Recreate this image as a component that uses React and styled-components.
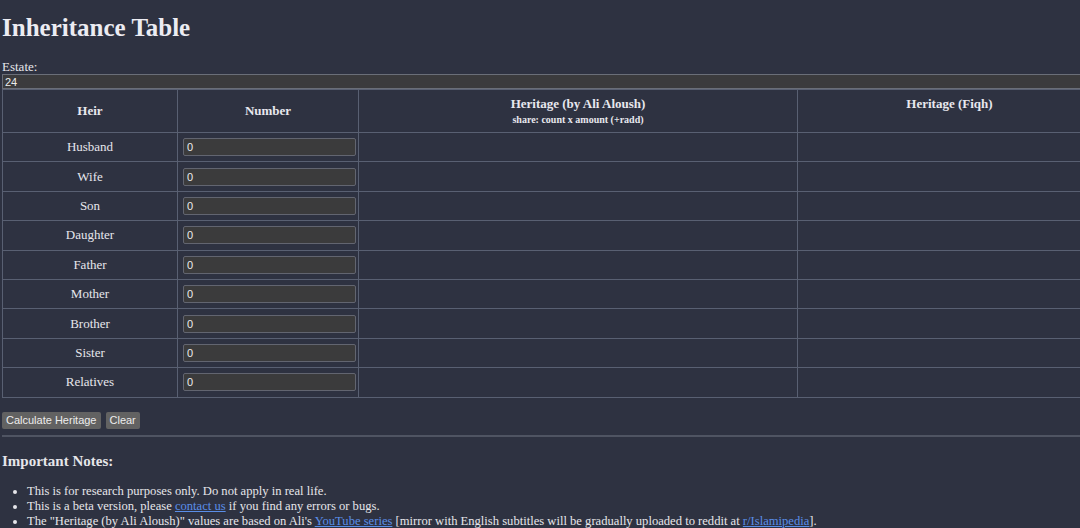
import React from 'react';
import styled, { createGlobalStyle } from 'styled-components';

const GlobalStyle = createGlobalStyle`
  html, body {
    margin: 0;
    padding: 0;
    background: #2e3241;
    overflow-x: hidden;
  }
  body {
    font-family: 'Liberation Serif', 'Times New Roman', serif;
    color: #e6e6ea;
  }
`;

const Page = styled.div`
  width: 1100px;
  padding: 0 0 0 2px;
`;

const Title = styled.h1`
  font-size: 25px;
  font-weight: 700;
  margin: 13px 0 17px;
  line-height: 30px;
  color: #ececf2;
`;

const Label = styled.div`
  font-size: 13px;
  line-height: 14px;
`;

const EstateInput = styled.input`
  display: block;
  box-sizing: border-box;
  width: 100%;
  height: 15px;
  margin: 0;
  padding: 0 2px;
  font-family: 'Liberation Sans', Arial, sans-serif;
  font-size: 11px;
  color: #ececec;
  background: #3b3b3d;
  border: 1px solid #6a6e78;
  outline: none;
`;

const Table = styled.table`
  width: 100%;
  border-collapse: collapse;
  table-layout: fixed;
  margin-top: 0;
`;

const Th = styled.th`
  border: 1px solid #596072;
  border-left-color: ${p => (p.$blue ? '#4a5f8c' : '#596072')};
  height: ${p => (p.$top ? '36px' : '42px')};
  padding: ${p => (p.$top ? '6px 0 0' : '0')};
  font-size: 13px;
  font-weight: 700;
  color: #e8e8ee;
  vertical-align: ${p => (p.$top ? 'top' : 'middle')};
  text-align: center;
`;

const Sub = styled.div`
  font-size: 10px;
  margin-top: 2px;
`;

const Td = styled.td`
  border: 1px solid #596072;
  border-left-color: ${p => (p.$blue ? '#4a5f8c' : '#596072')};
  height: 28.4px;
  padding: 0;
  font-size: 13px;
  color: #e6e6ec;
  text-align: ${p => (p.$left ? 'left' : 'center')};
`;

const NumInput = styled.input`
  display: block;
  box-sizing: border-box;
  width: 173px;
  height: 18px;
  margin: 0 0 0 5px;
  padding: 0 3px;
  font-family: 'Liberation Sans', Arial, sans-serif;
  font-size: 11px;
  color: #ececec;
  background: #3b3b3c;
  border: 1px solid #626570;
  border-radius: 2px;
  outline: none;
`;

const Buttons = styled.div`
  display: flex;
  gap: 5px;
  margin-top: 14px;
`;

const Button = styled.button`
  height: 17px;
  padding: 0 4px;
  font-family: 'Liberation Sans', Arial, sans-serif;
  font-size: 11px;
  color: #ededed;
  background: #626262;
  border: none;
  border-radius: 2px;
  cursor: pointer;
`;

const Rule = styled.hr`
  margin: 6px 0 0;
  border: none;
  border-top: 2px solid #4f5462;
  width: 1078px;
`;

const Notes = styled.h3`
  font-size: 15px;
  font-weight: 700;
  margin: 15px 0 14px;
  line-height: 18px;
`;

const List = styled.ul`
  margin: 0;
  padding-left: 25px;
  font-size: 12.6px;
  line-height: 15px;
`;

const Link = styled.a`
  color: #5a8ee8;
  text-decoration: underline;
`;

const heirs = ['Husband', 'Wife', 'Son', 'Daughter', 'Father', 'Mother', 'Brother', 'Sister', 'Relatives'];

export default function App() {
  return (
    <Page>
      <GlobalStyle />
      <Title>Inheritance Table</Title>
      <Label>Estate:</Label>
      <EstateInput defaultValue="24" />
      <Table>
        <colgroup>
          <col style={{ width: 175 }} />
          <col style={{ width: 181 }} />
          <col style={{ width: 439 }} />
          <col />
        </colgroup>
        <thead>
          <tr>
            <Th>Heir</Th>
            <Th>Number</Th>
            <Th $blue $top>
              Heritage (by Ali Aloush)
              <Sub>share: count x amount (+radd)</Sub>
            </Th>
            <Th $blue $top>Heritage (Fiqh)</Th>
          </tr>
        </thead>
        <tbody>
          {heirs.map(h => (
            <tr key={h}>
              <Td>{h}</Td>
              <Td $left><NumInput defaultValue="0" /></Td>
              <Td $blue />
              <Td $blue />
            </tr>
          ))}
        </tbody>
      </Table>
      <Buttons>
        <Button>Calculate Heritage</Button>
        <Button>Clear</Button>
      </Buttons>
      <Rule />
      <Notes>Important Notes:</Notes>
      <List>
        <li>This is for research purposes only. Do not apply in real life.</li>
        <li>This is a beta version, please <Link href="#">contact us</Link> if you find any errors or bugs.</li>
        <li>
          The "Heritage (by Ali Aloush)" values are based on Ali's <Link href="#">YouTube series</Link> [mirror with English
          subtitles will be gradually uploaded to reddit at <Link href="#">r/Islamipedia</Link>].
        </li>
      </List>
    </Page>
  );
}
